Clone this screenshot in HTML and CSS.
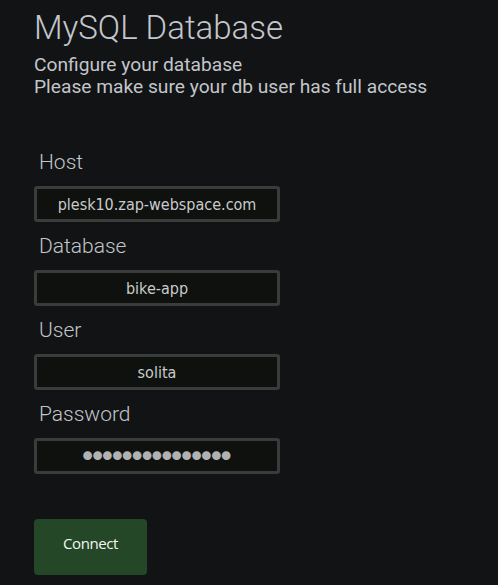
FILE: index.html
```html
<!DOCTYPE html>
<html lang="en">
<head>
<meta charset="utf-8">
<title>MySQL Database</title>
<link rel="stylesheet" href="styles.css">
</head>
<body>
<main class="page">
  <header class="intro">
    <h1 class="title">MySQL Database</h1>
    <p class="subtitle">Configure your database<br>Please make sure your db user has full access</p>
  </header>
  <form class="form">
    <div class="field">
      <label class="label" for="host">Host</label>
      <input class="input" id="host" type="text" value="plesk10.zap-webspace.com">
    </div>
    <div class="field">
      <label class="label" for="db">Database</label>
      <input class="input" id="db" type="text" value="bike-app">
    </div>
    <div class="field">
      <label class="label" for="user">User</label>
      <input class="input" id="user" type="text" value="solita">
    </div>
    <div class="field">
      <label class="label" for="pass">Password</label>
      <input class="input input-pass" id="pass" type="password" value="abcdefghijklmno">
    </div>
    <button class="button" type="button">Connect</button>
  </form>
</main>
</body>
</html>
```

FILE: styles.css
```css
html, body {
  margin: 0;
  padding: 0;
  background: #121315;
}
body {
  font-family: Roboto, "Liberation Sans", sans-serif;
  color: #c2c6ca;
}
.page {
  padding: 8px 0 0 34px;
  display: flex;
  flex-direction: column;
}
.intro {
  display: flex;
  flex-direction: column;
  gap: 6px;
}
.title {
  margin: 0;
  font-weight: 300;
  font-size: 33px;
  line-height: 40px;
  color: #c3c7cc;
}
.subtitle {
  margin: 0;
  font-weight: 400;
  font-size: 19.2px;
  line-height: 22px;
  color: #c2c6ca;
}
.form {
  margin-top: 52px;
  display: flex;
  flex-direction: column;
  align-items: flex-start;
  gap: 12px;
}
.field {
  display: flex;
  flex-direction: column;
  gap: 12px;
}
.label {
  padding-left: 5px;
  font-size: 21px;
  line-height: 24px;
  font-weight: 300;
  color: #c2c6ca;
}
.input {
  box-sizing: border-box;
  width: 246px;
  height: 36px;
  margin: 0;
  padding: 0 4px;
  border: 3px solid #3a3b3b;
  border-radius: 3px;
  background: #0e110e;
  color: #c9cbcd;
  font-family: "DejaVu Sans Condensed", "DejaVu Sans", sans-serif;
  font-stretch: semi-condensed;
  font-size: 16px;
  text-align: center;
  outline: none;
}
.input-pass {
  padding: 0 8px 0 0;
  color: #b0b1b2;
  font-family: "DejaVu Sans", sans-serif;
  font-stretch: normal;
  font-size: 30px;
  letter-spacing: -7.8px;
}
.button {
  margin-top: 33px;
  width: 113px;
  height: 56px;
  padding: 0 0 8px;
  border: 0;
  border-radius: 4px;
  background: #234727;
  color: #f4f6f4;
  font-family: "Open Sans", sans-serif;
  font-size: 15px;
  letter-spacing: -0.4px;
  cursor: pointer;
}
```
